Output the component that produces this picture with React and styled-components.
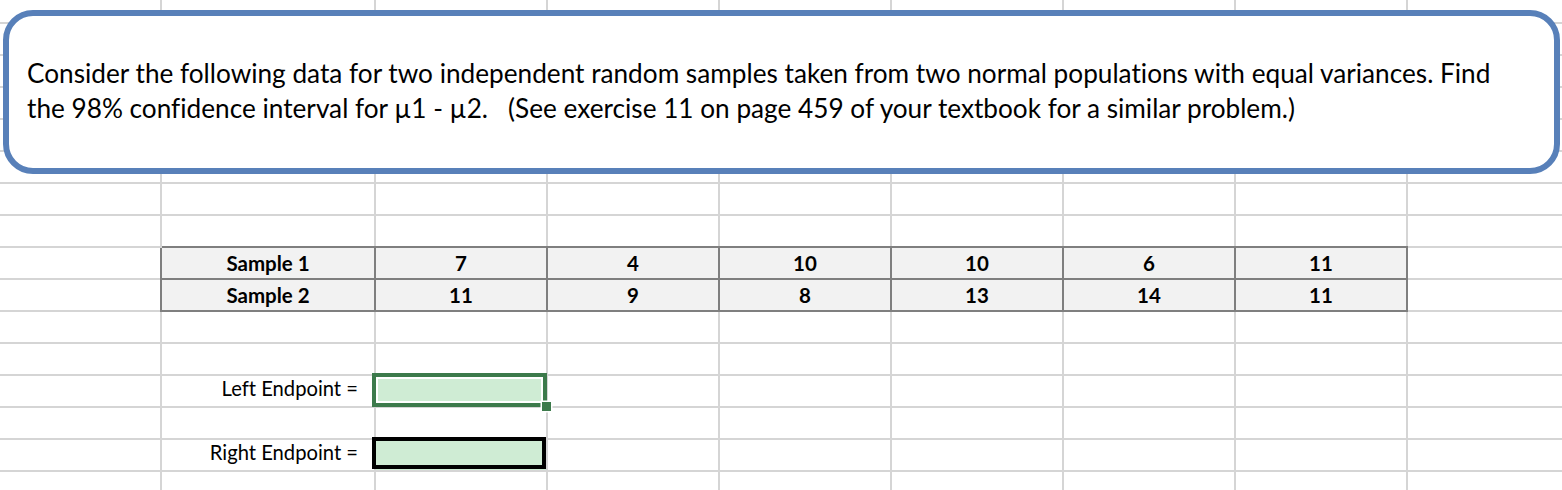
import React from 'react'
import styled, { createGlobalStyle } from 'styled-components'

const GlobalStyle = createGlobalStyle`
  html, body {
    margin: 0;
    padding: 0;
    background: #fff;
    overflow: hidden;
  }
`

// column widths include the 2px grid line on the right edge
const COLS = [162, 214, 172, 172, 172, 172, 172, 172, 172]
const ROWS = [24, ...Array(15).fill(32)]

const GRID = '#d5d5d5'
const FRAME = '#7f7f7f'
const INPUT_FILL = '#cfecd4'

const Page = styled.div`
  position: relative;
  width: 1562px;
  height: 490px;
  overflow: hidden;
  font-family: Lato, 'Noto Sans', sans-serif;
  font-variant-ligatures: none;
  color: #000;
`

const Sheet = styled.div`
  display: grid;
  grid-template-columns: ${COLS.map(c => `${c}px`).join(' ')};
  grid-template-rows: ${ROWS.map(r => `${r}px`).join(' ')};
`

const Cell = styled.div`
  box-sizing: border-box;
  border-right: 2px solid ${p => (p.$framed ? FRAME : GRID)};
  border-bottom: 2px solid ${p => (p.$framed ? FRAME : GRID)};
  background: ${p => p.$fill || '#fff'};
  box-shadow: ${p => (p.$framed ? `0 -2px 0 ${FRAME}, -2px 0 0 ${FRAME}` : 'none')};
  display: flex;
  align-items: flex-end;
  justify-content: ${p => p.$align || 'center'};
  padding: 0 ${p => p.$padRight || 0}px ${p => p.$padBottom || 5}px 0;
  font-size: ${p => (p.$bold ? 20.5 : 20.2)}px;
  font-weight: ${p => (p.$bold ? 700 : 400)};
  line-height: 1;
  white-space: nowrap;
`

// the selected cell: green selection frame plus fill handle
const SelectedCell = styled(Cell)`
  position: relative;

  &::before {
    content: '';
    position: absolute;
    left: -4px;
    top: -3px;
    right: -1px;
    bottom: -1px;
    border: 4px solid #3c7a4b;
    box-shadow: inset 0 0 0 2px #fff;
  }

  &::after {
    content: '';
    position: absolute;
    left: 166px;
    top: 26px;
    width: 9px;
    height: 9px;
    background: #3c7a4b;
    box-shadow: 0 0 0 1.5px #fff;
  }
`

const BoxedCell = styled(Cell)`
  position: relative;

  &::before {
    content: '';
    position: absolute;
    left: -4px;
    top: -3px;
    right: 0;
    bottom: 1px;
    border: 4px solid #000;
  }
`

const Callout = styled.div`
  position: absolute;
  left: 3px;
  top: 10px;
  width: 1557px;
  height: 164px;
  box-sizing: border-box;
  border: 6px solid #5880b9;
  border-radius: 30px;
  background: #fff;
  display: flex;
  align-items: center;
  padding: 0 0 2px 18px;
`

const CalloutText = styled.p`
  margin: 0;
  font-size: 26.2px;
  line-height: 35px;
  white-space: pre;
`

const samples = [
  ['Sample 1', 7, 4, 10, 10, 6, 11],
  ['Sample 2', 11, 9, 8, 13, 14, 11],
]

const content = {}
samples.forEach((row, i) => {
  row.forEach((v, j) => {
    content[`${8 + i},${1 + j}`] = { text: String(v), framed: true, bold: true, fill: '#f2f2f2' }
  })
})
content['12,1'] = { text: 'Left Endpoint =', align: 'flex-end', padRight: 16, padBottom: 8 }
content['12,2'] = { fill: INPUT_FILL, kind: 'selected' }
content['14,1'] = { text: 'Right Endpoint =', align: 'flex-end', padRight: 16, padBottom: 8 }
content['14,2'] = { fill: INPUT_FILL, kind: 'boxed' }

const App = () => {
  const cells = []
  ROWS.forEach((_, r) => {
    COLS.forEach((__, c) => {
      const data = content[`${r},${c}`] || {}
      const Comp = data.kind === 'selected' ? SelectedCell : data.kind === 'boxed' ? BoxedCell : Cell
      cells.push(
        <Comp
          key={`${r}-${c}`}
          $framed={data.framed}
          $bold={data.bold}
          $fill={data.fill}
          $align={data.align}
          $padRight={data.padRight}
          $padBottom={data.padBottom}
        >
          {data.text}
        </Comp>
      )
    })
  })

  return (
    <Page>
      <GlobalStyle />
      <Sheet>{cells}</Sheet>
      <Callout>
        <CalloutText>
          Consider the following data for two independent random samples taken from two normal populations with equal variances. Find
          {'\n'}
          the 98% confidence interval for µ1 - µ2.   (See exercise 11 on page 459 of your textbook for a similar problem.)
        </CalloutText>
      </Callout>
    </Page>
  )
}

export default App
